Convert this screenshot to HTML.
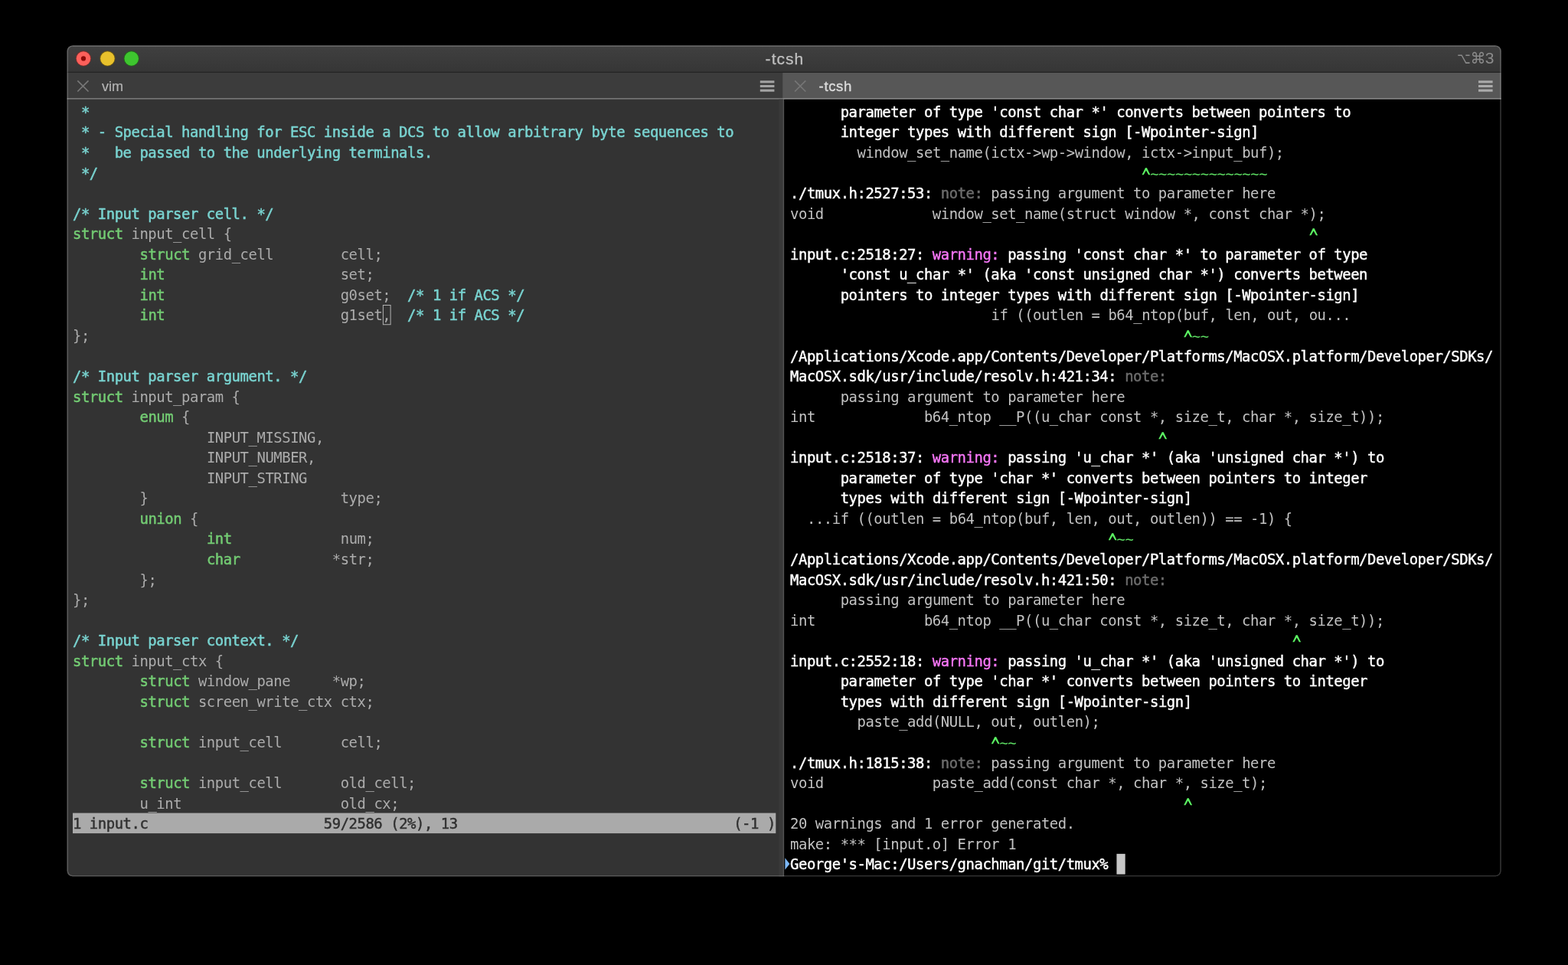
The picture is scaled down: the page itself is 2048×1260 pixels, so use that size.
<!DOCTYPE html>
<html lang="en"><head><meta charset="utf-8"><title>-tcsh</title>
<style>
html,body{margin:0;padding:0;background:#000;}
body{width:2048px;height:1260px;position:relative;overflow:hidden;font-family:"Liberation Sans", "DejaVu Sans", sans-serif;}
svg{position:absolute;left:0;top:0;overflow:visible;}
#txt{position:absolute;left:0;top:0;width:2048px;height:1260px;will-change:transform;}
.ttl{position:absolute;top:61.5px;left:999.6px;white-space:nowrap;font-size:21px;line-height:30px;color:#c0c0c0;letter-spacing:1.05px;-webkit-text-stroke:.25px currentColor;}
.kbd{position:absolute;top:60.5px;left:1902.6px;font-size:20px;line-height:30px;color:#8b8b8b;white-space:nowrap;font-family:"DejaVu Sans","Liberation Sans",sans-serif;}
.kbd i{display:inline-block;font-style:normal;transform-origin:0 50%;transform:scaleX(.76);width:17.9px;}
.kbd b{font-weight:normal;margin-left:-.75px;font-family:"Liberation Sans", "DejaVu Sans", sans-serif;font-size:21px;}
.lab{position:absolute;font-size:18px;line-height:24px;top:100.5px;color:#b4b4b4;-webkit-text-stroke:.2px currentColor;}
.t{position:absolute;white-space:pre;font-family:"DejaVu Sans Mono", "Liberation Mono", monospace;font-size:18.9px;line-height:26.55px;height:26.55px;letter-spacing:-0.4468px;font-kerning:none;font-variant-ligatures:none;-webkit-text-stroke-width:0.25px;}
.u b{font-weight:normal;display:inline-block;transform-origin:50% 6.2px;transform:translateY(.8px) scaleY(1.6);}
.u em{font-style:normal;position:relative;top:1px;-webkit-text-stroke-width:0;color:#5cdc62;}
.c{color:#79d3d0;-webkit-text-stroke-width:.5px;}
.g{color:#73cb73;-webkit-text-stroke-width:.5px;}
.n{color:#acacac;-webkit-text-stroke-width:0;}
.s{color:#303030;-webkit-text-stroke-width:.45px;}
.b{color:#fff;-webkit-text-stroke-width:.42px;}
.w{color:#c2c2c2;-webkit-text-stroke-width:0;}
.m{color:#f776f7;-webkit-text-stroke-width:.42px;}
.d{color:#6b6b6b;-webkit-text-stroke-width:.5px;}
.u{color:#5ef765;-webkit-text-stroke-width:.3px;}
</style></head>
<body>
<svg width="2048" height="1260" viewBox="0 0 2048 1260">
<defs>
<clipPath id="wc"><rect x="87.6" y="59.4" width="1873.0" height="1084.9" rx="7.2"/></clipPath>
<linearGradient id="tg" x1="0" y1="0" x2="0" y2="1"><stop offset="0" stop-color="#404040"/><stop offset="1" stop-color="#363636"/></linearGradient>
</defs>
<g clip-path="url(#wc)">
<rect x="80" y="50" width="1890" height="1100" fill="#333"/>
<rect x="80" y="59" width="1890" height="35" fill="url(#tg)"/>
<rect x="80" y="93.7" width="1890" height="1.4" fill="#252525"/>
<rect x="80" y="95" width="942.2" height="33.5" fill="#3c3c3c"/>
<rect x="1022.2" y="95" width="950" height="33.5" fill="#575757"/>
<rect x="80" y="128.2" width="942.2" height="1.6" fill="#858585"/>
<rect x="1022.2" y="128.2" width="950" height="1.6" fill="#959595"/>
<rect x="80" y="129.7" width="942.6" height="1020" fill="#333333"/>
<rect x="1017.4" y="129.7" width="5.4" height="1020" fill="#393939"/>
<rect x="1022.6" y="129.7" width="1.6" height="1020" fill="#525252"/>
<rect x="1024.2" y="129.7" width="950" height="1020" fill="#000"/>
<rect x="95.00" y="1061.55" width="918.29" height="26.55" fill="#aaaaaa"/>
<rect x="1458.45" y="1114.85" width="11.23" height="26.75" fill="#c7c7c7"/>
<rect x="500.38" y="398.50" width="9.73" height="25.25" fill="none" stroke="#b2b2b2" stroke-width="1"/>
<path d="M1025.4 1120.2L1031.4 1127.9L1025.4 1135.6Z" fill="#7db8f7"/>
</g>
<rect x="88.3" y="60.1" width="1871.6" height="1083.5" rx="6.5" fill="none" stroke="#fff" stroke-opacity=".2" stroke-width="1.4"/>
<path d="M95 60.1H1953" stroke="#fff" stroke-opacity=".1" stroke-width="1.4"/>
<circle cx="109.0" cy="76.45" r="10.1" fill="#7a2f2c"/><circle cx="109.0" cy="76.45" r="9.25" fill="#fc605b"/>
<circle cx="109.0" cy="76.45" r="3.1" fill="#8c0a08"/>
<circle cx="140.4" cy="76.45" r="10.1" fill="#6e5a14"/><circle cx="140.4" cy="76.45" r="9.25" fill="#e8c12c"/>
<circle cx="171.7" cy="76.45" r="10.1" fill="#23661b"/><circle cx="171.7" cy="76.45" r="9.25" fill="#3ec52f"/>
<path d="M101.3 105.3L115.5 119.5M115.5 105.3L101.3 119.5" stroke="#777" stroke-width="1.7" fill="none"/>
<path d="M1038.1 105.3L1052.3 119.5M1052.3 105.3L1038.1 119.5" stroke="#767676" stroke-width="1.7" fill="none"/>
<rect x="992.8" y="105.3" width="18.6" height="3.1" fill="#a3a3a3"/><rect x="992.8" y="110.95" width="18.6" height="3.1" fill="#a3a3a3"/><rect x="992.8" y="116.6" width="18.6" height="3.1" fill="#a3a3a3"/>
<rect x="1931" y="105.3" width="18.6" height="3.1" fill="#ababab"/><rect x="1931" y="110.95" width="18.6" height="3.1" fill="#ababab"/><rect x="1931" y="116.6" width="18.6" height="3.1" fill="#ababab"/>
</svg>
<main id="txt">
<header class="titlebar">
<div class="ttl">-tcsh</div>
<div class="kbd"><i>&#x2325;</i>&#x2318;<b>3</b></div>
</header>
<section class="pane left">
<div class="lab" style="left:133px">vim</div>
<div class="term">
<div class="t" style="left:105.93px;top:132.90px"><span class="c">*</span></div>
<div class="t" style="left:105.93px;top:159.45px"><span class="c">* - Special handling for ESC inside a DCS to allow arbitrary byte sequences to</span></div>
<div class="t" style="left:105.93px;top:186.00px"><span class="c">*   be passed to the underlying terminals.</span></div>
<div class="t" style="left:105.93px;top:212.55px"><span class="c">*/</span></div>
<div class="t" style="left:95.00px;top:265.65px"><span class="c">/* Input parser cell. */</span></div>
<div class="t" style="left:95.00px;top:292.20px"><span class="g">struct</span><span class="n"> input_cell {</span></div>
<div class="t" style="left:182.46px;top:318.75px"><span class="g">struct</span><span class="n"> grid_cell        cell;</span></div>
<div class="t" style="left:182.46px;top:345.30px"><span class="g">int</span><span class="n">                     set;</span></div>
<div class="t" style="left:182.46px;top:371.85px"><span class="g">int</span><span class="n">                     g0set;  </span><span class="c">/* 1 if ACS */</span></div>
<div class="t" style="left:182.46px;top:398.40px"><span class="g">int</span><span class="n">                     g1set,  </span><span class="c">/* 1 if ACS */</span></div>
<div class="t" style="left:95.00px;top:424.95px"><span class="n">};</span></div>
<div class="t" style="left:95.00px;top:478.05px"><span class="c">/* Input parser argument. */</span></div>
<div class="t" style="left:95.00px;top:504.60px"><span class="g">struct</span><span class="n"> input_param {</span></div>
<div class="t" style="left:182.46px;top:531.15px"><span class="g">enum</span><span class="n"> {</span></div>
<div class="t" style="left:269.91px;top:557.70px"><span class="n">INPUT_MISSING,</span></div>
<div class="t" style="left:269.91px;top:584.25px"><span class="n">INPUT_NUMBER,</span></div>
<div class="t" style="left:269.91px;top:610.80px"><span class="n">INPUT_STRING</span></div>
<div class="t" style="left:182.46px;top:637.35px"><span class="n">}                       type;</span></div>
<div class="t" style="left:182.46px;top:663.90px"><span class="g">union</span><span class="n"> {</span></div>
<div class="t" style="left:269.91px;top:690.45px"><span class="g">int</span><span class="n">             num;</span></div>
<div class="t" style="left:269.91px;top:717.00px"><span class="g">char</span><span class="n">           *str;</span></div>
<div class="t" style="left:182.46px;top:743.55px"><span class="n">};</span></div>
<div class="t" style="left:95.00px;top:770.10px"><span class="n">};</span></div>
<div class="t" style="left:95.00px;top:823.20px"><span class="c">/* Input parser context. */</span></div>
<div class="t" style="left:95.00px;top:849.75px"><span class="g">struct</span><span class="n"> input_ctx {</span></div>
<div class="t" style="left:182.46px;top:876.30px"><span class="g">struct</span><span class="n"> window_pane     *wp;</span></div>
<div class="t" style="left:182.46px;top:902.85px"><span class="g">struct</span><span class="n"> screen_write_ctx ctx;</span></div>
<div class="t" style="left:182.46px;top:955.95px"><span class="g">struct</span><span class="n"> input_cell       cell;</span></div>
<div class="t" style="left:182.46px;top:1009.05px"><span class="g">struct</span><span class="n"> input_cell       old_cell;</span></div>
<div class="t" style="left:182.46px;top:1035.60px"><span class="n">u_int                   old_cx;</span></div>
<div class="t" style="left:95.00px;top:1062.15px"><span class="s">1 input.c                     59/2586 (2%), 13                                 (-1 )</span></div>
</div>
</section>
<section class="pane right">
<div class="lab" style="left:1069.6px;color:#dadada;font-size:18.6px;letter-spacing:.6px;-webkit-text-stroke-width:.4px">-tcsh</div>
<div class="term">
<div class="t" style="left:1097.69px;top:132.90px"><span class="b">parameter of type 'const char *' converts between pointers to</span></div>
<div class="t" style="left:1097.69px;top:159.45px"><span class="b">integer types with different sign [-Wpointer-sign]</span></div>
<div class="t" style="left:1119.56px;top:186.00px"><span class="w">window_set_name(ictx-&gt;wp-&gt;window, ictx-&gt;input_buf);</span></div>
<div class="t" style="left:1491.24px;top:212.55px"><span class="u"><b>^</b><em>~~~~~~~~~~~~~~</em></span></div>
<div class="t" style="left:1032.10px;top:239.10px"><span class="b">./tmux.h:2527:53: </span><span class="d">note: </span><span class="w">passing argument to parameter here</span></div>
<div class="t" style="left:1032.10px;top:265.65px"><span class="w">void             window_set_name(struct window *, const char *);</span></div>
<div class="t" style="left:1709.88px;top:292.20px"><span class="u"><b>^</b></span></div>
<div class="t" style="left:1032.10px;top:318.75px"><span class="b">input.c:2518:27: </span><span class="m">warning: </span><span class="b">passing 'const char *' to parameter of type</span></div>
<div class="t" style="left:1097.69px;top:345.30px"><span class="b">'const u_char *' (aka 'const unsigned char *') converts between</span></div>
<div class="t" style="left:1097.69px;top:371.85px"><span class="b">pointers to integer types with different sign [-Wpointer-sign]</span></div>
<div class="t" style="left:1294.47px;top:398.40px"><span class="w">if ((outlen = b64_ntop(buf, len, out, ou...</span></div>
<div class="t" style="left:1545.90px;top:424.95px"><span class="u"><b>^</b><em>~~</em></span></div>
<div class="t" style="left:1032.10px;top:451.50px"><span class="b">/Applications/Xcode.app/Contents/Developer/Platforms/MacOSX.platform/Developer/SDKs/</span></div>
<div class="t" style="left:1032.10px;top:478.05px"><span class="b">MacOSX.sdk/usr/include/resolv.h:421:34: </span><span class="d">note:</span></div>
<div class="t" style="left:1097.69px;top:504.60px"><span class="w">passing argument to parameter here</span></div>
<div class="t" style="left:1032.10px;top:531.15px"><span class="w">int             b64_ntop __P((u_char const *, size_t, char *, size_t));</span></div>
<div class="t" style="left:1513.11px;top:557.70px"><span class="u"><b>^</b></span></div>
<div class="t" style="left:1032.10px;top:584.25px"><span class="b">input.c:2518:37: </span><span class="m">warning: </span><span class="b">passing 'u_char *' (aka 'unsigned char *') to</span></div>
<div class="t" style="left:1097.69px;top:610.80px"><span class="b">parameter of type 'char *' converts between pointers to integer</span></div>
<div class="t" style="left:1097.69px;top:637.35px"><span class="b">types with different sign [-Wpointer-sign]</span></div>
<div class="t" style="left:1053.96px;top:663.90px"><span class="w">...if ((outlen = b64_ntop(buf, len, out, outlen)) == -1) {</span></div>
<div class="t" style="left:1447.52px;top:690.45px"><span class="u"><b>^</b><em>~~</em></span></div>
<div class="t" style="left:1032.10px;top:717.00px"><span class="b">/Applications/Xcode.app/Contents/Developer/Platforms/MacOSX.platform/Developer/SDKs/</span></div>
<div class="t" style="left:1032.10px;top:743.55px"><span class="b">MacOSX.sdk/usr/include/resolv.h:421:50: </span><span class="d">note:</span></div>
<div class="t" style="left:1097.69px;top:770.10px"><span class="w">passing argument to parameter here</span></div>
<div class="t" style="left:1032.10px;top:796.65px"><span class="w">int             b64_ntop __P((u_char const *, size_t, char *, size_t));</span></div>
<div class="t" style="left:1688.02px;top:823.20px"><span class="u"><b>^</b></span></div>
<div class="t" style="left:1032.10px;top:849.75px"><span class="b">input.c:2552:18: </span><span class="m">warning: </span><span class="b">passing 'u_char *' (aka 'unsigned char *') to</span></div>
<div class="t" style="left:1097.69px;top:876.30px"><span class="b">parameter of type 'char *' converts between pointers to integer</span></div>
<div class="t" style="left:1097.69px;top:902.85px"><span class="b">types with different sign [-Wpointer-sign]</span></div>
<div class="t" style="left:1119.56px;top:929.40px"><span class="w">paste_add(NULL, out, outlen);</span></div>
<div class="t" style="left:1294.47px;top:955.95px"><span class="u"><b>^</b><em>~~</em></span></div>
<div class="t" style="left:1032.10px;top:982.50px"><span class="b">./tmux.h:1815:38: </span><span class="d">note: </span><span class="w">passing argument to parameter here</span></div>
<div class="t" style="left:1032.10px;top:1009.05px"><span class="w">void             paste_add(const char *, char *, size_t);</span></div>
<div class="t" style="left:1545.90px;top:1035.60px"><span class="u"><b>^</b></span></div>
<div class="t" style="left:1032.10px;top:1062.15px"><span class="w">20 warnings and 1 error generated.</span></div>
<div class="t" style="left:1032.10px;top:1088.70px"><span class="w">make: *** [input.o] Error 1</span></div>
<div class="t" style="left:1032.10px;top:1115.25px"><span class="b">George's-Mac:/Users/gnachman/git/tmux% </span></div>
</div>
</section>
</main>
</body></html>
